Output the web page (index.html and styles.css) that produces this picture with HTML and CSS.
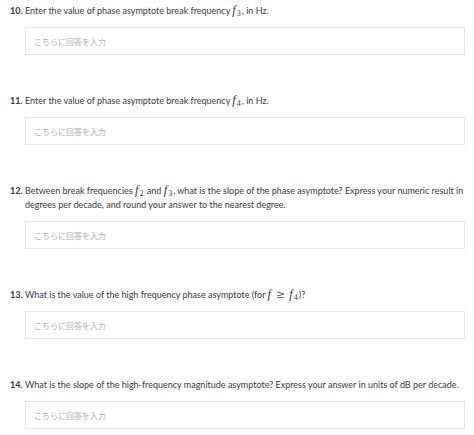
FILE: index.html
```html
<!DOCTYPE html>
<html lang="ja">
<head>
<meta charset="utf-8">
<link rel="stylesheet" href="styles.css">
</head>
<body>
<div class="list">
  <div class="item">
    <div class="q"><span class="num">10.</span><span class="txt">Enter the value of phase asymptote break frequency <span class="m">f</span><span class="s">3</span>, in Hz.</span></div>
    <div class="box"><span class="ph">こちらに回答を入力</span></div>
  </div>
  <div class="item">
    <div class="q"><span class="num">11.</span><span class="txt">Enter the value of phase asymptote break frequency <span class="m">f</span><span class="s">4</span>, in Hz.</span></div>
    <div class="box"><span class="ph">こちらに回答を入力</span></div>
  </div>
  <div class="item">
    <div class="q"><span class="num">12.</span><span class="txt">Between break frequencies <span class="m">f</span><span class="s">2</span> and <span class="m">f</span><span class="s">3</span>, what is the slope of the phase asymptote? Express your numeric result in degrees per decade, and round your answer to the nearest degree.</span></div>
    <div class="box"><span class="ph">こちらに回答を入力</span></div>
  </div>
  <div class="item">
    <div class="q"><span class="num">13.</span><span class="txt">What is the value of the high frequency phase asymptote (for <span class="m">f</span><span class="rel">≥</span><span class="m">f</span><span class="s">4</span>)?</span></div>
    <div class="box"><span class="ph">こちらに回答を入力</span></div>
  </div>
  <div class="item">
    <div class="q"><span class="num">14.</span><span class="txt">What is the slope of the high-frequency magnitude asymptote? Express your answer in units of dB per decade.</span></div>
    <div class="box"><span class="ph">こちらに回答を入力</span></div>
  </div>
</div>
</body>
</html>
```
FILE: styles.css
```css
html, body {
  margin: 0;
  padding: 0;
  background: #ffffff;
}
body {
  font-family: "Lato", "Noto Sans CJK JP", sans-serif;
  color: #3a3a3a;
  font-size: 9px;
  width: 474px;
  height: 435px;
  overflow: hidden;
}
.list {
  display: flex;
  flex-direction: column;
  padding-top: 4px;
}
.item {
  display: flex;
  flex-direction: column;
  padding-bottom: 39px;
}
.item:last-child {
  padding-bottom: 0;
}
.q {
  display: flex;
  padding-left: 10px;
  padding-right: 4px;
  line-height: 14px;
}
.num {
  font-weight: bold;
  width: 15px;
  flex: none;
}
.txt {
  flex: 1;
}
.m {
  font-family: "Liberation Serif", serif;
  font-style: italic;
  font-size: 12.5px;
  line-height: 0;
  padding-right: 1px;
}
.s {
  font-family: "Liberation Serif", serif;
  font-size: 8px;
  position: relative;
  top: 2px;
  line-height: 0;
  padding-right: 1px;
}
.rel {
  font-family: "DejaVu Serif", serif;
  font-size: 11px;
  line-height: 0;
  color: #555;
  padding: 0 4px;
}
.box {
  margin: 9px 9px 0 25px;
  height: 28px;
  box-sizing: border-box;
  border: 1px solid #e6e6e6;
  display: flex;
  align-items: center;
  padding-left: 8px;
}
.ph {
  font-family: "Noto Sans CJK JP", sans-serif;
  font-size: 8px;
  color: #b0b0b0;
}
```
